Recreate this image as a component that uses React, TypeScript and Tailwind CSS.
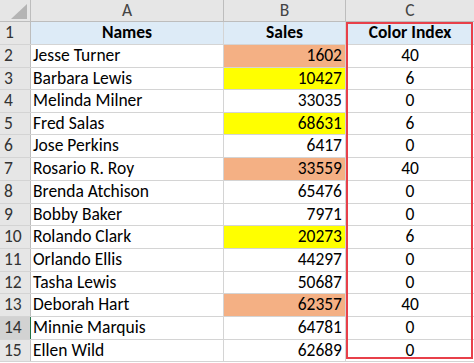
const rows: { name: string; sales: number; idx: number }[] = [
  { name: "Jesse Turner", sales: 1602, idx: 40 },
  { name: "Barbara Lewis", sales: 10427, idx: 6 },
  { name: "Melinda Milner", sales: 33035, idx: 0 },
  { name: "Fred Salas", sales: 68631, idx: 6 },
  { name: "Jose Perkins", sales: 6417, idx: 0 },
  { name: "Rosario R. Roy", sales: 33559, idx: 40 },
  { name: "Brenda Atchison", sales: 65476, idx: 0 },
  { name: "Bobby Baker", sales: 7971, idx: 0 },
  { name: "Rolando Clark", sales: 20273, idx: 6 },
  { name: "Orlando Ellis", sales: 44297, idx: 0 },
  { name: "Tasha Lewis", sales: 50687, idx: 0 },
  { name: "Deborah Hart", sales: 62357, idx: 40 },
  { name: "Minnie Marquis", sales: 64781, idx: 0 },
  { name: "Ellen Wild", sales: 62689, idx: 0 },
];

// row heights so the gridlines land where Excel put them
const heights = ["h-[23px]", "h-[22px]", "h-[23px]", "h-[22px]", "h-[23px]", "h-[23px]", "h-[23px]", "h-[22px]", "h-[23px]", "h-[23px]", "h-[22px]", "h-[23px]", "h-[23px]", "h-[22px]", "h-[23px]"];

function fill(idx: number) {
  if (idx === 40) return "bg-[#f4b084]";
  if (idx === 6) return "bg-[#ffff00]";
  return "bg-white";
}

export default function App() {
  return (
    <div className="w-[474px] h-[363px] overflow-hidden bg-white text-[17.5px] leading-none text-black" style={{ fontFamily: "Calibri, Carlito, 'Liberation Sans', sans-serif" }}>
      {/* column letters */}
      <div className="flex h-[22px] bg-[#e6e6e6] border-b border-[#bdbdbd] text-[#444]">
        <div className="w-[31px] shrink-0 border-r border-[#bdbdbd] flex items-end justify-end pr-[3px] pb-[2px]">
          <svg width="16" height="15" viewBox="0 0 16 15">
            <polygon points="16,0 16,15 0,15" fill="#b4b4b4" />
          </svg>
        </div>
        <div className="w-[193px] shrink-0 border-r border-[#bdbdbd] flex items-center justify-center">A</div>
        <div className="w-[122px] shrink-0 border-r border-[#bdbdbd] flex items-center justify-center">B</div>
        <div className="flex-1 flex items-center justify-center">C</div>
      </div>

      <div className="relative">
        <div className="flex h-[23px] border-b border-[#d4d4d4]">
          <div className="w-[31px] shrink-0 bg-[#e6e6e6] border-r border-[#bdbdbd] flex items-center pl-[5px] text-[#333]">1</div>
          <div className="w-[193px] shrink-0 bg-[#ddebf7] border-r border-[#d4d4d4] flex items-center justify-center font-bold">Names</div>
          <div className="w-[122px] shrink-0 bg-[#ddebf7] border-r border-[#d4d4d4] flex items-center justify-center font-bold">Sales</div>
          <div className="flex-1 bg-[#ddebf7] flex items-center justify-center font-bold">Color Index</div>
        </div>

        {rows.map((r, i) => (
          <div key={r.name} className={`flex border-b border-[#d4d4d4] ${heights[i]}`}>
            <div
              className={`w-[31px] shrink-0 border-r flex items-center pl-[4px] text-[#333] ${
                i === 12 ? "bg-[#d2d2d2] border-[#217346]" : "bg-[#e6e6e6] border-[#bdbdbd]"
              }`}
            >
              {i + 2}
            </div>
            <div className="w-[193px] shrink-0 border-r border-[#d4d4d4] flex items-center pl-[2px]">{r.name}</div>
            <div className={`w-[122px] shrink-0 border-r border-[#d4d4d4] flex items-center justify-end pr-[3px] ${fill(r.idx)}`}>
              {r.sales}
            </div>
            <div className="flex-1 flex items-center justify-center">{r.idx}</div>
          </div>
        ))}

        {/* highlight around column C */}
        <div className="absolute left-[346px] top-0 w-[127px] h-[337px] border-2 border-[#e8404a] pointer-events-none" />
      </div>
    </div>
  );
}
